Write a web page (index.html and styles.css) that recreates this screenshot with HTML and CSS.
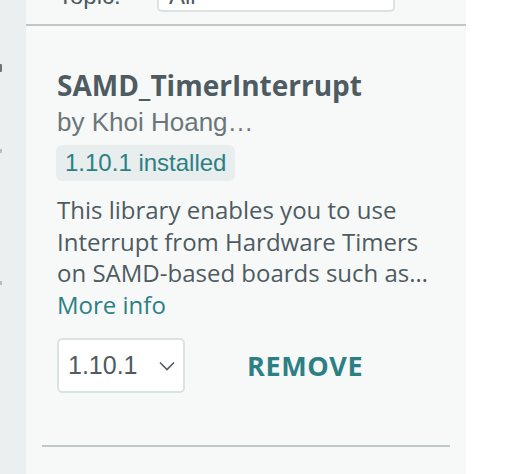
FILE: index.html
```html
<!DOCTYPE html>
<html>
<head>
<meta charset="utf-8">
<link rel="stylesheet" href="styles.css">
</head>
<body>
<div class="sidebar">
  <span class="mark mark-dark"></span>
  <span class="mark mark-light mark-2"></span>
  <span class="mark mark-light mark-3"></span>
</div>
<div class="panel">
  <div class="filter">
    <span class="filter-label">Topic:</span>
    <span class="filter-select">All</span>
  </div>
  <div class="item">
    <div class="title">SAMD_TimerInterrupt</div>
    <div class="author">by Khoi Hoang…</div>
    <div class="badge">1.10.1 installed</div>
    <p class="desc">This library enables you to use Interrupt from Hardware Timers on SAMD-based boards such as…<br><a class="more">More info</a></p>
    <div class="actions">
      <div class="version">
        <span>1.10.1</span>
        <svg class="chev" width="16" height="10" viewBox="0 0 16 10"><path d="M1 1.5 L8 8.5 L15 1.5" fill="none" stroke="#4e5b61" stroke-width="1.6"/></svg>
      </div>
      <button class="remove">REMOVE</button>
    </div>
  </div>
</div>
</body>
</html>
```
FILE: styles.css
```css
html, body {
  margin: 0;
  padding: 0;
  background: #ffffff;
}
body {
  display: flex;
  height: 474px;
  overflow: hidden;
  font-family: "Open Sans", sans-serif;
}
.sidebar {
  width: 26px;
  flex: none;
  background: #ebeff0;
  display: flex;
  flex-direction: column;
}
.mark {
  display: block;
  width: 2px;
  border-radius: 0 1px 1px 0;
}
.mark-dark {
  margin-top: 64px;
  height: 8px;
  background: #6b767a;
}
.mark-light {
  height: 4px;
  background: #b4bcbe;
}
.mark-2 { margin-top: 77px; }
.mark-3 { margin-top: 128px; }
.panel {
  width: 440px;
  flex: none;
  background: #f7f9f9;
  display: flex;
  flex-direction: column;
}
.filter {
  height: 24px;
  border-bottom: 2px solid #bfc8c6;
  display: flex;
  align-items: flex-end;
  padding-left: 32px;
  overflow: hidden;
}
.filter-label {
  font-family: "Liberation Sans", sans-serif;
  font-size: 24px;
  color: #4e5b61;
  width: 99px;
  margin-bottom: 14px;
}
.filter-select {
  box-sizing: border-box;
  width: 238px;
  height: 40px;
  margin-bottom: 12px;
  border: 2px solid #dae2e2;
  border-top: none;
  border-radius: 0 0 5px 5px;
  background: #fff;
  font-family: "Liberation Sans", sans-serif;
  font-size: 24px;
  color: #4e5b61;
  padding: 0 10px 2px;
  display: flex;
  align-items: flex-end;
  line-height: 1;
}
.item {
  margin: 0 16px;
  padding: 42px 15px 0;
  border-bottom: 2px solid #c0c8c6;
  height: 421px;
  box-sizing: border-box;
}
.title {
  font-weight: 700;
  font-size: 28px;
  line-height: 34px;
  color: #4e5b61;
}
.author {
  font-family: "Liberation Sans", sans-serif;
  font-size: 26px;
  line-height: 40px;
  color: #6c7679;
}
.badge {
  width: fit-content;
  margin-top: 3px;
  margin-left: -1px;
  background: #e8eded;
  border-radius: 6px;
  padding: 0 9px;
  height: 36px;
  line-height: 36px;
  font-family: "Liberation Sans", sans-serif;
  font-size: 24px;
  color: #2c8084;
}
.desc {
  margin: 13px 0 0;
  font-size: 24px;
  line-height: 31.6px;
  color: #4e5b61;
}
.more {
  color: #2c8084;
}
.actions {
  margin-top: 18px;
  display: flex;
  align-items: center;
}
.version {
  box-sizing: border-box;
  width: 128px;
  height: 55px;
  border: 2px solid #dae2e2;
  border-radius: 5px;
  background: #fff;
  display: flex;
  align-items: center;
  justify-content: space-between;
  padding: 0 8px 0 9px;
  font-family: "Liberation Sans", sans-serif;
  font-size: 25px;
  color: #4e5b61;
}
.remove {
  margin-left: 62px;
  border: none;
  background: none;
  padding: 0;
  font-family: "Open Sans", sans-serif;
  font-weight: 700;
  font-size: 27px;
  letter-spacing: 0.6px;
  color: #2c8084;
}
```
